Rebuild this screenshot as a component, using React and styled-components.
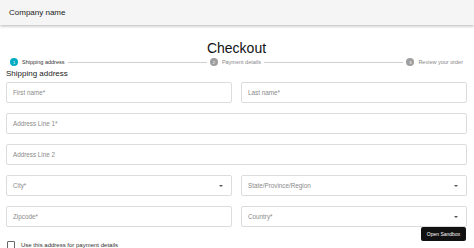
import React from "react";
import styled, { createGlobalStyle } from "styled-components";

const GlobalStyle = createGlobalStyle`
  html, body {
    margin: 0;
    padding: 0;
    background: #ffffff;
    font-family: "Liberation Sans", Arial, sans-serif;
    overflow: hidden;
  }
`;

const AppBar = styled.header`
  height: 25px;
  background-color: #f5f5f5;
  box-shadow: 0 1px 3px rgba(0, 0, 0, 0.3);
  display: flex;
  align-items: center;
  padding: 0 9px;
  font-size: 8px;
  color: #222;
`;

const Main = styled.main`
  padding: 16px 7px 0 6px;
`;

const Title = styled.h1`
  margin: 0;
  text-align: center;
  font-size: 14px;
  font-weight: 400;
  line-height: 15px;
  color: #111;
`;

const Stepper = styled.div`
  display: flex;
  align-items: center;
  padding: 0 4px 0 4px;
  height: 12px;
`;

const Step = styled.div`
  display: flex;
  align-items: center;
  gap: 4px;
  font-size: 5.5px;
  color: ${(p) => (p.active ? "#333" : "#888")};
  white-space: nowrap;
`;

const StepDot = styled.span`
  width: 8px;
  height: 8px;
  border-radius: 50%;
  background: ${(p) => (p.active ? "#00acc1" : "#9e9e9e")};
  color: #fff;
  font-size: 4px;
  display: flex;
  align-items: center;
  justify-content: center;
`;

const Connector = styled.div`
  flex: 1;
  height: 1px;
  background: #cfcfcf;
  margin: 0 3px;
`;

const SectionTitle = styled.h2`
  margin: 0 0 3px 0;
  font-size: 8px;
  font-weight: 400;
  line-height: 11px;
  color: #222;
`;

const Grid = styled.div`
  display: grid;
  grid-template-columns: 1fr 1fr;
  column-gap: 9px;
  row-gap: 10px;
`;

const Field = styled.div`
  grid-column: ${(p) => (p.full ? "1 / span 2" : "auto")};
  height: 21px;
  border: 1px solid #dcdcdc;
  border-radius: 2px;
  box-sizing: border-box;
  display: flex;
  align-items: center;
  justify-content: space-between;
  padding: 0 8px 0 6px;
  font-size: 6.3px;
  color: #8a8a8a;
`;

const Caret = styled.span`
  width: 0;
  height: 0;
  border-left: 2px solid transparent;
  border-right: 2px solid transparent;
  border-top: 2px solid #555;
`;

const CheckRow = styled.label`
  display: flex;
  align-items: center;
  gap: 6px;
  margin-top: 14px;
  font-size: 6px;
  color: #333;
`;

const Box = styled.span`
  width: 6px;
  height: 6px;
  border: 1px solid #666;
  border-radius: 1px;
  margin-left: 1px;
`;

const SandboxTip = styled.div`
  position: fixed;
  left: 421px;
  top: 227px;
  width: 45px;
  height: 14px;
  background: #111;
  color: #fff;
  font-size: 5px;
  border-radius: 2px;
  display: flex;
  align-items: center;
  justify-content: center;
`;

const fields = [
  { label: "First name*" },
  { label: "Last name*" },
  { label: "Address Line 1*", full: true },
  { label: "Address Line 2", full: true },
  { label: "City*", select: true },
  { label: "State/Province/Region", select: true },
  { label: "Zipcode*" },
  { label: "Country*", select: true },
];

const App = () => {
  return (
    <>
      <GlobalStyle />
      <AppBar>Company name</AppBar>
      <Main>
        <Title>Checkout</Title>
        <Stepper>
          <Step active>
            <StepDot active>1</StepDot>
            Shipping address
          </Step>
          <Connector />
          <Step>
            <StepDot>2</StepDot>
            Payment details
          </Step>
          <Connector />
          <Step>
            <StepDot>3</StepDot>
            Review your order
          </Step>
        </Stepper>
        <SectionTitle>Shipping address</SectionTitle>
        <Grid>
          {fields.map((f) => (
            <Field key={f.label} full={f.full}>
              {f.label}
              {f.select && <Caret />}
            </Field>
          ))}
        </Grid>
        <CheckRow>
          <Box />
          Use this address for payment details
        </CheckRow>
      </Main>
      <SandboxTip>Open Sandbox</SandboxTip>
    </>
  );
};

export default App;
